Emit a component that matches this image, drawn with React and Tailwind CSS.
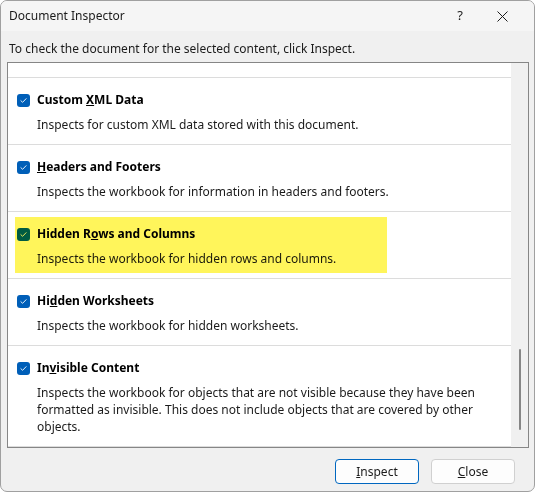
import React from "react";

const Check = ({ tone = "bg-[#005fb8]" }) => (
  <span className={`flex h-[13px] w-[13px] shrink-0 items-center justify-center rounded-[3px] ${tone}`}>
    <svg width="9" height="9" viewBox="0 0 9 9">
      <path d="M1.9 4.7 L3.6 6.3 L7.1 2.7" fill="none" stroke="white" strokeWidth="0.9" strokeLinecap="round" strokeLinejoin="round" />
    </svg>
  </span>
);

function Section({ title, lines, highlight }) {
  return (
    <div className="relative border-b border-[#dcdcdc] pl-[9px] pt-[14px] pb-[11px]">
      <div className="flex h-[16px] items-center gap-[7px]">
        <Check />
        <span className="text-[12px] font-bold leading-[16px] text-black">{title}</span>
      </div>
      <div className="mt-[8px] pl-[20px] text-[12px] leading-[17px] text-[#1b1b1b]">
        {lines.map((l, i) => (
          <div key={i} className="whitespace-nowrap">{l}</div>
        ))}
      </div>
      {highlight && (
        <div className="pointer-events-none absolute left-[7px] top-[5px] h-[56px] w-[372px] bg-[#fff55b] mix-blend-multiply" />
      )}
    </div>
  );
}

export default function App() {
  return (
    <div className="h-[493px] w-[536px] bg-white font-['Segoe_UI','Noto_Sans',sans-serif]">
      <div className="flex h-[492px] w-[535px] flex-col overflow-hidden rounded-[7px] border border-[#a0a0a0] bg-[#f0f0f0]">
        <div className="flex h-[30px] shrink-0 items-center justify-between bg-[#f5f5f5] pl-[8px] pr-[22px]">
          <span className="text-[12px] text-[#1b1b1b]">Document Inspector</span>
          <div className="flex items-center gap-[22px]">
            <span className="flex w-[20px] justify-center text-[13px] text-[#1b1b1b]">?</span>
            <span className="flex w-[20px] justify-center">
              <svg width="11" height="11" viewBox="0 0 11 11">
                <path d="M0.5 0.5 L10.5 10.5 M10.5 0.5 L0.5 10.5" stroke="#1b1b1b" strokeWidth="1" />
              </svg>
            </span>
          </div>
        </div>
        <div className="pl-[8px] pt-[9px] text-[12px] leading-[17px] text-[#1b1b1b]">
          To check the document for the selected content, click Inspect.
        </div>
        <div className="ml-[6px] mt-[5px] flex h-[386px] w-[522px] border border-[#868686] bg-white">
          <div className="flex-1 overflow-hidden">
            <div className="h-[15px] border-b border-[#dcdcdc]" />
            <Section
              title={<>Custom <u>X</u>ML Data</>}
              lines={["Inspects for custom XML data stored with this document."]}
            />
            <Section
              title={<><u>H</u>eaders and Footers</>}
              lines={["Inspects the workbook for information in headers and footers."]}
            />
            <Section
              title={<>Hidden R<u>o</u>ws and Columns</>}
              lines={["Inspects the workbook for hidden rows and columns."]}
              highlight
            />
            <Section
              title={<>Hi<u>d</u>den Worksheets</>}
              lines={["Inspects the workbook for hidden worksheets."]}
            />
            <Section
              title={<>In<u>v</u>isible Content</>}
              lines={[
                "Inspects the workbook for objects that are not visible because they have been",
                "formatted as invisible. This does not include objects that are covered by other",
                "objects.",
              ]}
            />
          </div>
          <div className="flex w-[17px] shrink-0 justify-center bg-[#f0f0f0] pt-[286px]">
            <div className="h-[81px] w-[2px] rounded-full bg-[#868686]" />
          </div>
        </div>
        <div className="mt-[11px] flex justify-end gap-[12px] pr-[19px]">
          <button className="h-[25px] w-[84px] rounded-[4px] border border-[#0067c0] bg-[#fdfdfd] text-[12px] text-[#1b1b1b]">
            <u>I</u>nspect
          </button>
          <button className="h-[25px] w-[84px] rounded-[4px] border border-[#d0d0d0] bg-[#fdfdfd] text-[12px] text-[#1b1b1b]">
            <u>C</u>lose
          </button>
        </div>
      </div>
    </div>
  );
}
